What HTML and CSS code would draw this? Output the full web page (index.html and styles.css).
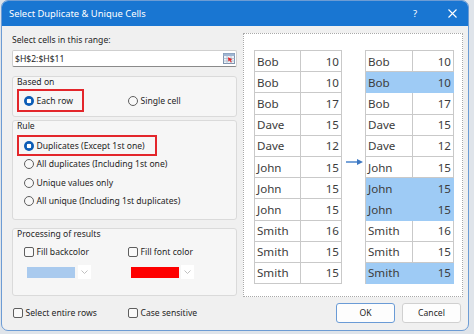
FILE: index.html
```html
<!DOCTYPE html>
<html>
<head>
<meta charset="utf-8">
<link rel="stylesheet" href="styles.css">
</head>
<body>
<div class="window">
  <div class="titlebar">
    <span class="title">Select Duplicate &amp; Unique Cells</span>
    <span class="help">?</span>
    <svg class="close" width="9" height="9" viewBox="0 0 9 9"><path d="M0.5 0.5L8.5 8.5M8.5 0.5L0.5 8.5" stroke="#fff" stroke-width="1.1" fill="none"/></svg>
  </div>
  <div class="content">
    <div class="left">
      <div class="lbl">Select cells in this range:</div>
      <div class="input">
        <span class="range">$H$2:$H$11</span>
        <svg class="picker" width="12" height="11" viewBox="0 0 12 11">
          <rect x="0.5" y="0.5" width="11" height="10" fill="#eef3f9" stroke="#7f95b0"/>
          <rect x="0.5" y="0.5" width="11" height="2.5" fill="#9fb6d3"/>
          <path d="M0.5 5.5H11.5M0.5 8H11.5M4 3V10.5M8 3V10.5" stroke="#a9b9cc" stroke-width="0.8"/>
          <path d="M5 4.2L9.5 6.2L7.6 6.9L8.8 9L7.9 9.5L6.7 7.4L5.4 8.6Z" fill="#e0262a"/>
        </svg>
      </div>

      <div class="group g1">
        <div class="glabel">Based on</div>
        <div class="g1row">
          <div class="hl hl1"><span class="radio on"></span><span>Each row</span></div>
          <div class="opt single"><span class="radio"></span><span>Single cell</span></div>
        </div>
      </div>

      <div class="group g2">
        <div class="glabel">Rule</div>
        <div class="hl hl2"><span class="radio on"></span><span>Duplicates (Except 1st one)</span></div>
        <div class="opt rule first"><span class="radio"></span><span>All duplicates (Including 1st one)</span></div>
        <div class="opt rule"><span class="radio"></span><span>Unique values only</span></div>
        <div class="opt rule"><span class="radio"></span><span>All unique (Including 1st duplicates)</span></div>
      </div>

      <div class="group g3">
        <div class="glabel">Processing of results</div>
        <div class="g3row">
          <div class="opt c1"><span class="check"></span><span>Fill backcolor</span></div>
          <div class="opt"><span class="check"></span><span>Fill font color</span></div>
        </div>
        <div class="swrow">
          <div class="combo cb1"><span class="swatch blue"></span><span class="drop"><svg width="7" height="4" viewBox="0 0 7 4"><path d="M0.5 0.5L3.5 3.5L6.5 0.5" stroke="#b9b9b9" fill="none" stroke-width="0.9"/></svg></span></div>
          <div class="combo cb2"><span class="swatch red"></span><span class="drop"><svg width="7" height="4" viewBox="0 0 7 4"><path d="M0.5 0.5L3.5 3.5L6.5 0.5" stroke="#b9b9b9" fill="none" stroke-width="0.9"/></svg></span></div>
        </div>
      </div>

      <div class="bottom">
        <div class="opt b1"><span class="check"></span><span>Select entire rows</span></div>
        <div class="opt"><span class="check"></span><span>Case sensitive</span></div>
      </div>
    </div>

    <div class="right">
      <div class="panel">
        <div class="tbl t1">
          <div class="c n">Bob</div><div class="c v">10</div>
          <div class="c n">Bob</div><div class="c v">10</div>
          <div class="c n">Bob</div><div class="c v">17</div>
          <div class="c n">Dave</div><div class="c v">15</div>
          <div class="c n">Dave</div><div class="c v">12</div>
          <div class="c n">John</div><div class="c v">15</div>
          <div class="c n">John</div><div class="c v">15</div>
          <div class="c n">John</div><div class="c v">15</div>
          <div class="c n">Smith</div><div class="c v">16</div>
          <div class="c n">Smith</div><div class="c v">15</div>
          <div class="c n">Smith</div><div class="c v">15</div>
        </div>
        <svg class="arrow" width="17" height="8" viewBox="0 0 17 8"><path d="M0 4H12" stroke="#4a84cc" stroke-width="1.3"/><path d="M11 1L17 4L11 7Z" fill="#3d78c2"/></svg>
        <div class="tbl t2">
          <div class="c n">Bob</div><div class="c v">10</div>
          <div class="c n h">Bob</div><div class="c v h">10</div>
          <div class="c n">Bob</div><div class="c v">17</div>
          <div class="c n">Dave</div><div class="c v">15</div>
          <div class="c n">Dave</div><div class="c v">12</div>
          <div class="c n">John</div><div class="c v">15</div>
          <div class="c n h">John</div><div class="c v h">15</div>
          <div class="c n h">John</div><div class="c v h">15</div>
          <div class="c n">Smith</div><div class="c v">16</div>
          <div class="c n">Smith</div><div class="c v">15</div>
          <div class="c n h">Smith</div><div class="c v h">15</div>
        </div>
      </div>
      <div class="buttons">
        <button class="btn ok">OK</button>
        <button class="btn">Cancel</button>
      </div>
    </div>
  </div>
</div>
</body>
</html>
```

FILE: styles.css
```css
* { box-sizing: border-box; }
html, body { margin: 0; padding: 0; }
body {
  width: 474px;
  height: 334px;
  overflow: hidden;
  background: #dfe4ea;
  font-family: "Noto Sans", "Open Sans", sans-serif;
  font-size: 8.6px;
  color: #1e1e1e;
}
.window {
  margin-left: 1px;
  width: 468px;
  height: 331px;
  border: 1px solid #6d9cd4;
  border-radius: 7px;
  overflow: hidden;
  background: #f0f0f0;
}
.titlebar {
  height: 25px;
  background: #1976d2;
  color: #fff;
  display: flex;
  align-items: center;
  padding-left: 7px;
  padding-right: 11px;
}
.title { flex: 1; font-size: 9.4px; }
.help { width: 10px; text-align: center; margin-right: 28px; font-size: 9.5px; }
.close { display: block; }

.content { display: flex; }
.left { width: 235px; padding-left: 10px; padding-top: 9px; }
.lbl { line-height: 10px; height: 10px; }
.input {
  margin-top: 5px;
  height: 17px;
  background: #fff;
  border: 1px solid #cfcfcf;
  border-bottom-color: #8a8a8a;
  border-radius: 2px;
  display: flex;
  align-items: center;
  padding-left: 2px;
  padding-right: 1px;
}
.range { flex: 1; }
.picker { display: block; }

.group {
  border: 1px solid #dadada;
  border-radius: 3px;
  background: #f6f6f6;
  padding-left: 4px;
}
.glabel { line-height: 10px; height: 10px; }
.g1 { margin-top: 9px; height: 41px; }
.g2 { margin-top: 3px; height: 100px; }
.g3 { margin-top: 8px; height: 68px; }

.opt, .hl { display: flex; align-items: center; gap: 2.5px; white-space: nowrap; }
.hl { border: 2px solid #e3262b; padding-left: 5px; }
.g1row { display: flex; margin-top: 2px; }
.hl1 { width: 67px; height: 23px; }
.single { margin-left: 44px; }
.hl2 { width: 140px; height: 21px; margin-top: 4px; }
.rule { height: 18.5px; padding-left: 7px; }
.rule.first { margin-top: -1px; }

.radio {
  width: 10px;
  height: 10px;
  border-radius: 50%;
  border: 1px solid #5e5e5e;
  background: #f8f8f8;
  flex: none;
}
.radio.on {
  border: none;
  background: radial-gradient(circle, #ffffff 0, #ffffff 2.1px, #0b5cb6 2.6px);
}
.check {
  width: 10px;
  height: 10px;
  border-radius: 2px;
  border: 1px solid #5e5e5e;
  background: #f9f9f9;
  flex: none;
}

.g3row { display: flex; margin-top: 7px; height: 12px; padding-left: 7px; }
.c1 { width: 104px; }
.swrow { display: flex; margin-top: 7px; height: 14px; padding-left: 10px; }
.combo { display: flex; align-items: center; }
.cb1 { width: 104px; gap: 3px; }
.cb2 { gap: 2px; }
.swatch { width: 48px; height: 11px; display: block; }
.swatch.blue { background: #a9caee; }
.swatch.red { background: #fe0000; }
.drop {
  width: 13px;
  height: 14px;
  background: #fff;
  display: flex;
  align-items: center;
  justify-content: center;
}
.drop svg { display: block; }

.bottom { display: flex; margin-top: 11px; height: 12px; padding-left: 1px; }
.b1 { width: 115px; }

.right { width: 220px; margin-left: 6px; padding-top: 7px; }
.panel {
  height: 264px;
  border: 1px dotted #a9a9a9;
  background: #ffffff;
  padding: 16px 0 0 10px;
  display: flex;
  align-items: flex-start;
}
.tbl {
  display: grid;
  grid-auto-rows: 21.2px;
  border-top: 1px solid #c9c9c9;
  border-left: 1px solid #c9c9c9;
  font-size: 11.6px;
  color: #3c3c3c;
}
.t1 { grid-template-columns: 46px 41px; }
.t2 { grid-template-columns: 47px 41px; margin-left: 2px; }
.c {
  border-right: 1px solid #c9c9c9;
  border-bottom: 1px solid #c9c9c9;
  display: flex;
  align-items: center;
}
.n { padding-left: 2px; }
.v { justify-content: flex-end; padding-right: 2px; }
.c.h { background: #9ecbf5; border-color: #9ecbf5; }
.arrow { display: block; margin-left: 4px; margin-top: 108px; }

.buttons { display: flex; justify-content: flex-end; gap: 7px; margin-top: 6px; padding-right: 2px; }
.btn {
  width: 59px;
  height: 20px;
  border: 1px solid #d0d0d0;
  border-radius: 3px;
  background: #fdfdfd;
  font-family: "Noto Sans", "Open Sans", sans-serif;
  font-size: 8.6px;
  color: #1e1e1e;
  padding: 0;
}
.btn.ok { border: 1px solid #6a9bd6; }
```
